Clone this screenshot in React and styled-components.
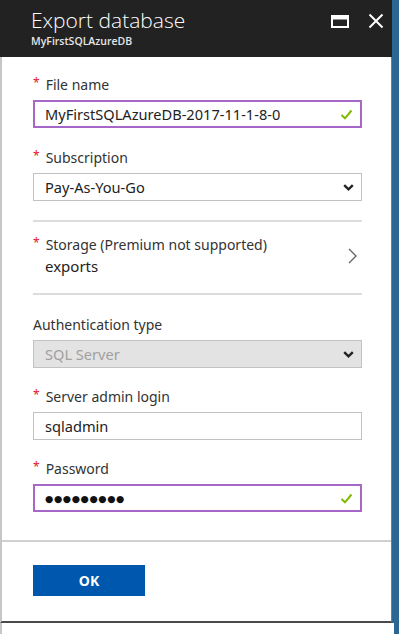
import React from 'react';
import styled, { createGlobalStyle } from 'styled-components';

const GlobalStyle = createGlobalStyle`
  html, body {
    margin: 0;
    padding: 0;
    background: #fff;
  }
  body {
    font-family: "Noto Sans", "Open Sans", sans-serif;
    color: #333;
  }
`;

const fields = [
  { id: 'name', label: 'File name', required: true, value: 'MyFirstSQLAzureDB-2017-11-1-8-0', kind: 'input', valid: true },
  { id: 'sub', label: 'Subscription', required: true, value: 'Pay-As-You-Go', kind: 'select' },
];

const CheckIcon = () => (
  <svg width="13" height="11" viewBox="0 0 13 11">
    <path d="M1.5 6 L5 9.3 L11.5 1.5" fill="none" stroke="#7fba00" strokeWidth="2" />
  </svg>
);

const ChevronDown = ({ color }) => (
  <svg width="11" height="7" viewBox="0 0 11 7">
    <path d="M1.2 1.2 L5.5 5.3 L9.8 1.2" fill="none" stroke={color} strokeWidth="2.4" />
  </svg>
);

const ChevronRight = () => (
  <svg width="9" height="16" viewBox="0 0 9 16">
    <path d="M1 1 L8 8 L1 15" fill="none" stroke="#666" strokeWidth="1.4" />
  </svg>
);

const MaximizeIcon = () => (
  <svg width="18" height="13" viewBox="0 0 18 13">
    <rect x="1" y="1" width="16" height="11" fill="none" stroke="#fff" strokeWidth="2" />
    <rect x="1" y="1" width="16" height="3.5" fill="#fff" />
  </svg>
);

const CloseIcon = () => (
  <svg width="16" height="16" viewBox="0 0 16 16">
    <path d="M1.5 1.5 L14.5 14.5 M14.5 1.5 L1.5 14.5" stroke="#fff" strokeWidth="2" />
  </svg>
);

const App = () => {
  return (
    <>
      <GlobalStyle />
      <Page>
        <Panel>
          <Header>
            <TitleBlock>
              <Title>Export database</Title>
              <Subtitle>MyFirstSQLAzureDB</Subtitle>
            </TitleBlock>
            <HeaderActions>
              <IconButton><MaximizeIcon /></IconButton>
              <IconButton><CloseIcon /></IconButton>
            </HeaderActions>
          </Header>

          <Body>
            <Field>
              <Label><Star>*</Star>{fields[0].label}</Label>
              <InputBox $focused>
                <Value>{fields[0].value}</Value>
                <CheckIcon />
              </InputBox>
            </Field>

            <Field $top={20}>
              <Label><Star>*</Star>{fields[1].label}</Label>
              <InputBox>
                <Value>{fields[1].value}</Value>
                <ChevronDown color="#222" />
              </InputBox>
            </Field>

            <Divider $top={19} />

            <PickerRow>
              <div>
                <Label><Star>*</Star>Storage (Premium not supported)</Label>
                <PickerValue>exports</PickerValue>
              </div>
              <ChevronRight />
            </PickerRow>

            <Divider $top={0} />

            <Field $top={20}>
              <Label>Authentication type</Label>
              <InputBox $disabled>
                <Value $muted>SQL Server</Value>
                <ChevronDown color="#222" />
              </InputBox>
            </Field>

            <Field $top={19}>
              <Label><Star>*</Star>Server admin login</Label>
              <InputBox>
                <Value>sqladmin</Value>
              </InputBox>
            </Field>

            <Field $top={19}>
              <Label><Star>*</Star>Password</Label>
              <InputBox $focused>
                <Dots>●●●●●●●●●</Dots>
                <CheckIcon />
              </InputBox>
            </Field>
          </Body>

          <Footer>
            <OkButton>OK</OkButton>
          </Footer>
        </Panel>
        <Strip />
      </Page>
      <BottomFill />
    </>
  );
};

const Page = styled.div`
  display: flex;
  height: 623px;
`;

const Panel = styled.div`
  width: 392px;
  display: flex;
  flex-direction: column;
  border-left: 2px solid #c6c6c6;
  border-right: 1px solid #7a7a7a;
  border-bottom: 2px solid #4a4a4a;
  box-sizing: border-box;
  background: #fff;
`;

const Strip = styled.div`
  flex: 1;
  background: #2c6794;
`;

const BottomFill = styled.div`
  height: 11px;
  background: #fff;
  border-left: 2px solid #c6c6c6;
  border-right: 5px solid #2c6794;
`;

const Header = styled.div`
  height: 57px;
  background: #222222;
  display: flex;
  justify-content: space-between;
  align-items: flex-start;
  padding: 0 8px 0 31px;
  margin-left: -2px;
  margin-right: -1px;
`;

const TitleBlock = styled.div`
  display: flex;
  flex-direction: column;
`;

const Title = styled.div`
  font-family: "Open Sans", "Noto Sans", sans-serif;
  font-weight: 300;
  font-size: 21px;
  line-height: 28px;
  margin-top: 6px;
  color: #fff;
`;

const Subtitle = styled.div`
  font-family: "Open Sans", "Noto Sans", sans-serif;
  font-weight: 600;
  font-size: 10.5px;
  line-height: 14px;
  color: #e6e6e6;
`;

const HeaderActions = styled.div`
  display: flex;
  align-items: center;
  gap: 19px;
  margin-top: 13px;
`;

const IconButton = styled.div`
  display: flex;
  align-items: center;
  justify-content: center;
  height: 16px;
`;

const Body = styled.div`
  padding: 18px 29px 0 31px;
  display: flex;
  flex-direction: column;
`;

const Field = styled.div`
  display: flex;
  flex-direction: column;
  gap: 5px;
  margin-top: ${(p) => p.$top || 0}px;
`;

const Label = styled.div`
  font-size: 14px;
  line-height: 20px;
  color: #333;
  display: flex;
  align-items: flex-start;
`;

const Star = styled.span`
  color: #e81123;
  font-size: 12px;
  line-height: 16px;
  margin-right: 6px;
`;

const InputBox = styled.div`
  height: 28px;
  box-sizing: border-box;
  display: flex;
  align-items: center;
  justify-content: space-between;
  padding: 0 7px 0 11px;
  border: 1px solid ${(p) => (p.$focused ? '#a767c6' : '#c2c2c2')};
  border-width: ${(p) => (p.$focused ? '2px' : '1px')};
  padding-left: ${(p) => (p.$focused ? '10px' : '11px')};
  background: ${(p) => (p.$disabled ? '#e3e3e3' : '#fff')};
`;

const Value = styled.span`
  font-size: 14.6px;
  color: ${(p) => (p.$muted ? '#a0a0a0' : '#222')};
  white-space: nowrap;
`;

const Dots = styled.span`
  font-family: "DejaVu Sans", sans-serif;
  font-size: 9.5px;
  letter-spacing: 0.6px;
  color: #111;
`;

const Divider = styled.div`
  height: 2px;
  background: #dcdcdc;
  margin-top: ${(p) => p.$top}px;
`;

const PickerRow = styled.div`
  display: flex;
  align-items: center;
  justify-content: space-between;
  padding: 13px 5px 16px 0;
`;

const PickerValue = styled.div`
  font-size: 15px;
  line-height: 22px;
  color: #222;
  margin-left: 12px;
`;

const Footer = styled.div`
  margin-top: 28px;
  border-top: 2px solid #d0d0d0;
  padding: 23px 0 0 31px;
`;

const OkButton = styled.button`
  width: 112px;
  height: 31px;
  border: none;
  background: #0058ae;
  color: #fff;
  font-family: "Noto Sans", sans-serif;
  font-weight: 700;
  font-size: 14px;
  cursor: pointer;
`;

export default App;
